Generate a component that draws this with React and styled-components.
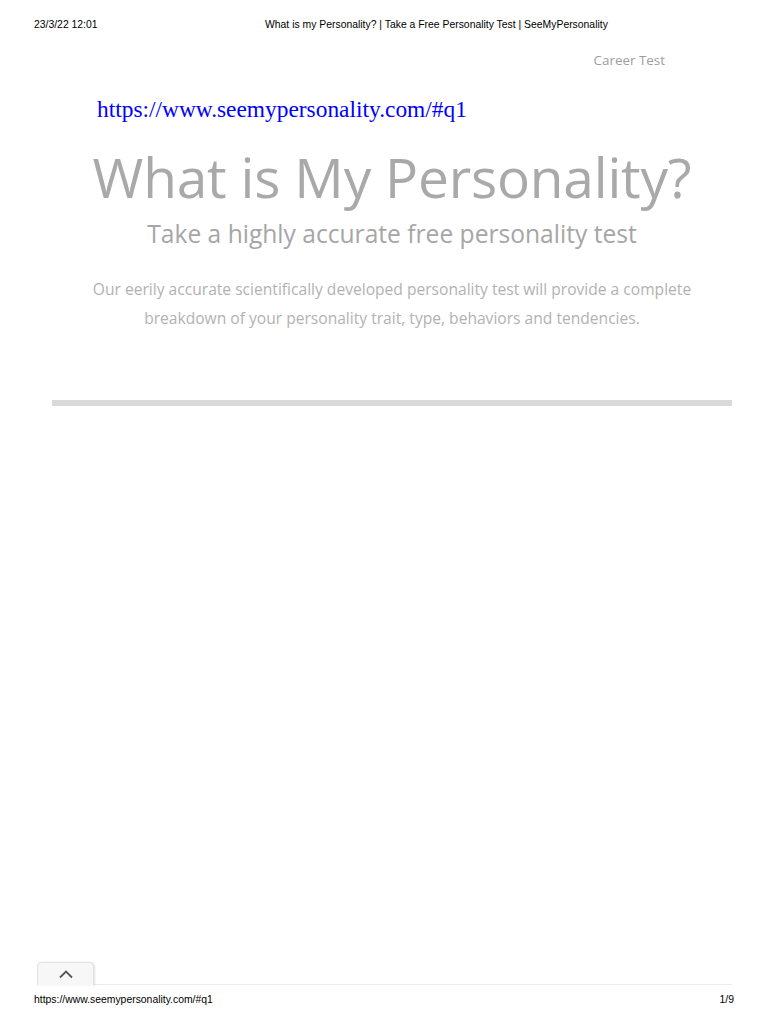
import React from "react";
import styled, { createGlobalStyle } from "styled-components";

const GlobalStyle = createGlobalStyle`
	html, body {
		margin: 0;
		padding: 0;
		background: #ffffff;
	}
	#root {
		width: 768px;
		height: 1024px;
	}
`;

const colors = {
	printText: "#000000",
	heading: "#a9a9a9",
	sub: "#a6a6a6",
	body: "#b2b2b2",
	nav: "#9e9e9e",
	link: "#0000ff",
	bar: "#d9d9d9",
	rule: "#ececec",
};

// Page frame
const Page = styled.div`
	position: relative;
	width: 768px;
	height: 1024px;
	display: flex;
	flex-direction: column;
	font-family: "Liberation Sans", Arial, sans-serif;
	background: #fff;
`;

//! Print header
const PrintHeader = styled.header`
	display: flex;
	align-items: center;
	padding: 18px 34px 0 34px;
	height: 12px;
	font-size: 10.4px;
	color: ${colors.printText};
`;

const PrintDate = styled.span`
	width: 231px;
`;

const PrintTitle = styled.span`
	flex: 1;
	text-align: left;
`;

//! Nav
const Nav = styled.nav`
	display: flex;
	justify-content: flex-end;
	padding: 21px 103px 0 0;
`;

const NavLink = styled.span`
	font-family: "Open Sans", "Noto Sans", sans-serif;
	font-size: 13.4px;
	color: ${colors.nav};
`;

//! Hero
const Hero = styled.section`
	margin: 0 36px 0 52px;
	display: flex;
	flex-direction: column;
	align-items: center;
	font-family: "Open Sans", "Noto Sans", sans-serif;
`;

const UrlLine = styled.a`
	align-self: flex-start;
	margin: 27px 0 0 45px;
	font-family: "Liberation Serif", "Times New Roman", serif;
	font-size: 23.4px;
	line-height: 26px;
	color: ${colors.link};
	text-decoration: none;
`;

const Title = styled.h1`
	margin: 19px 0 0 0;
	font-weight: 400;
	font-size: 55px;
	line-height: 72px;
	letter-spacing: -0.2px;
	color: ${colors.heading};
`;

const Subtitle = styled.h2`
	margin: 2px 0 0 0;
	font-weight: 400;
	font-size: 24.6px;
	line-height: 38px;
	color: ${colors.sub};
`;

const Lead = styled.p`
	margin: 22px 0 0 0;
	font-size: 15.6px;
	line-height: 29px;
	text-align: center;
	color: ${colors.body};
`;

const Progress = styled.div`
	align-self: stretch;
	margin-top: 67px;
	height: 6px;
	background: ${colors.bar};
`;

//! Footer
const Spacer = styled.div`
	flex: 1;
`;

const TabRow = styled.div`
	display: flex;
	align-items: flex-end;
	margin: 0 36px 0 37px;
	border-bottom: 1px solid ${colors.rule};
`;

const ScrollTab = styled.button`
	width: 57px;
	height: 23px;
	margin-bottom: -1px;
	display: flex;
	align-items: center;
	justify-content: center;
	background: #f7f7f7;
	border: 1px solid #e2e2e2;
	border-bottom: none;
	border-radius: 5px 5px 0 0;
	box-shadow: 1px 0 2px rgba(0, 0, 0, 0.12);
	padding: 0;
`;

const PrintFooter = styled.footer`
	display: flex;
	justify-content: space-between;
	padding: 9px 34px 0 34px;
	height: 30px;
	font-size: 10.4px;
	color: ${colors.printText};
`;

export default function App() {
	return (
		<>
			<GlobalStyle />
			<Page>
				<PrintHeader>
					<PrintDate>23/3/22 12:01</PrintDate>
					<PrintTitle>
						What is my Personality? | Take a Free Personality Test | SeeMyPersonality
					</PrintTitle>
				</PrintHeader>

				<Nav>
					<NavLink>Career Test</NavLink>
				</Nav>

				<Hero>
					<UrlLine href="#q1">https://www.seemypersonality.com/#q1</UrlLine>
					<Title>What is My Personality?</Title>
					<Subtitle>Take a highly accurate free personality test</Subtitle>
					<Lead>
						Our eerily accurate scientifically developed personality test will provide a complete
						<br />
						breakdown of your personality trait, type, behaviors and tendencies.
					</Lead>
					<Progress />
				</Hero>

				<Spacer />

				<TabRow>
					<ScrollTab aria-label="Scroll to top">
						<svg width="16" height="10" viewBox="0 0 16 10" fill="none">
							<path d="M2 8.5 L8 2.5 L14 8.5" stroke="#555" strokeWidth="1.8" />
						</svg>
					</ScrollTab>
				</TabRow>

				<PrintFooter>
					<span>https://www.seemypersonality.com/#q1</span>
					<span>1/9</span>
				</PrintFooter>
			</Page>
		</>
	);
}
